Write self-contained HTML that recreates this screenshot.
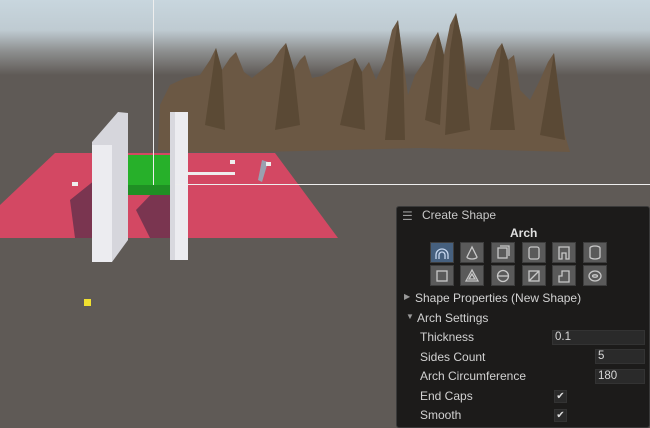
<!DOCTYPE html>
<html><head><style>
*{margin:0;padding:0;box-sizing:border-box}
body{width:650px;height:428px;overflow:hidden;position:relative;font-family:"Liberation Sans",sans-serif;background:#5f5a56}
#sky{position:absolute;left:0;top:0;width:650px;height:75px;background:linear-gradient(#c8d6de 0%,#bfcbd2 40%,#8e9090 68%,#5f5a56 100%)}
#panel{position:absolute;left:396px;top:206px;width:254px;height:222px;background:#1c1b1a;border:1px solid #3a3a3a;border-radius:3px;color:#d2d2d2;font-size:12px}
.t{position:absolute;white-space:nowrap}
.btn{position:absolute;width:24px;height:21px;background:#5a5a5a;border:1px solid #3e3e3e}
.fld{position:absolute;height:15px;background:#2a2a2a;border:1px solid #333;font-size:11.5px;padding-left:2px;line-height:13px;color:#d8d8d8}
.cb{position:absolute;width:13px;height:13px;background:#2a2a2a;border:1px solid #333;font-size:10px;line-height:11px;text-align:center;color:#ddd}
</style></head><body>
<div id="sky"></div>
<svg width="650" height="428" style="position:absolute;left:0;top:0">
<polygon fill="#6b5844" points="158,150 160,105 170,85 185,78 200,75 210,60 216,48 222,70 230,58 236,52 244,72 252,78 262,70 272,62 280,50 286,43 294,70 300,60 305,55 312,78 322,76 335,68 348,62 355,58 362,72 369,62 376,80 385,60 392,30 398,20 403,60 408,95 415,75 425,60 433,40 438,32 444,55 450,25 456,13 462,40 468,85 478,90 490,70 497,50 502,43 508,60 514,55 520,90 530,100 540,80 548,62 554,53 560,100 565,135 570,152 500,150 420,148 340,150 260,152 190,152"/>
<g fill="#54442f" opacity=".7">
<polygon points="216,48 222,70 225,130 205,125"/>
<polygon points="286,43 294,70 300,125 275,130"/>
<polygon points="398,20 403,60 405,140 385,140 392,60"/>
<polygon points="456,13 462,40 470,130 445,135 450,50"/>
<polygon points="438,32 444,55 440,125 425,120"/>
<polygon points="502,43 508,60 515,130 490,130"/>
<polygon points="554,53 560,100 565,140 540,135"/>
<polygon points="355,58 362,72 365,130 340,125"/>
</g>
<polygon fill="#d34863" points="55,153 275,153 338,238 0,238 0,205"/>
<polygon fill="#7a3550" points="70,200 95,180 95,238 75,238"/>
<polygon fill="#7a3550" points="136,210 160,185 172,190 172,238 150,238"/>
<rect x="123" y="155" width="48" height="40" fill="#27b02a"/>
<rect x="123" y="185" width="48" height="10" fill="#1f8f24"/>
<polygon fill="#d6d6dc" points="92,142 118,112 128,113 128,240 112,262 92,262"/>
<rect x="92" y="145" width="20" height="117" fill="#ececf0"/>
<rect x="170" y="112" width="18" height="148" fill="#ececf0"/>
<rect x="170" y="112" width="5" height="148" fill="#d8d8de"/>
<rect x="185" y="172" width="50" height="3" fill="#eee"/>
<polygon fill="#9aa0b0" points="262,160 268,162 262,182 258,180"/>
<rect x="266" y="162" width="5" height="4" fill="#eee"/>
<rect x="230" y="160" width="5" height="4" fill="#eee"/>
<rect x="72" y="182" width="6" height="4" fill="#eee"/>
<line x1="153.5" y1="0" x2="153.5" y2="185" stroke="#eee" stroke-width="1"/>
<line x1="175" y1="184.5" x2="650" y2="184.5" stroke="#eee" stroke-width="1"/>
<rect x="84" y="299" width="7" height="7" fill="#f0e030"/>
</svg>
<div id="panel">
<div class="t" style="left:5px;top:2px;color:#9a9a9a">☰</div>
<div class="t" style="left:25px;top:1px;color:#c8c8c8">Create Shape</div>
<div class="t" style="left:113px;top:19px;font-weight:bold;color:#e0e0e0">Arch</div>
<div class="btn" style="left:33px;top:35px;background:#46607e"></div>
<div class="btn" style="left:63px;top:35px"></div>
<div class="btn" style="left:94px;top:35px"></div>
<div class="btn" style="left:125px;top:35px"></div>
<div class="btn" style="left:155px;top:35px"></div>
<div class="btn" style="left:186px;top:35px"></div>
<div class="btn" style="left:33px;top:58px"></div>
<div class="btn" style="left:63px;top:58px"></div>
<div class="btn" style="left:94px;top:58px"></div>
<div class="btn" style="left:125px;top:58px"></div>
<div class="btn" style="left:155px;top:58px"></div>
<div class="btn" style="left:186px;top:58px"></div>
<svg width="254" height="90" style="position:absolute;left:0;top:0" fill="none" stroke="#c8c8c8" stroke-width="1.3">
<path d="M39,52 v-4 a6,6 0 0 1 12,0 v4 M42,52 v-4 a3,3 0 0 1 6,0 v4" stroke="#c8d8f0"/>
<path d="M75,40 l-5,10 a5,2 0 0 0 10,0 z"/>
<rect x="101" y="41" width="9" height="10"/><path d="M103,39 h9 v10"/>
<rect x="132" y="40" width="10" height="12" rx="2"/>
<path d="M162,52 v-12 h10 v12 h-3 v-6 h-4 v6 z"/>
<path d="M193,41 v9 a5,2 0 0 0 10,0 v-9 a5,2 0 0 0 -10,0"/>
<rect x="40" y="64" width="10" height="10"/>
<path d="M75,63 l-6,11 h12 z M75,67 l-3,5 h6 z"/>
<circle cx="106" cy="69" r="5.5"/><path d="M100.5,69 h11"/>
<rect x="132" y="64" width="10" height="10"/><path d="M132,74 l10,-10"/>
<path d="M162,75 v-6 h3 v-5 h7 v11 z"/>
<ellipse cx="198" cy="69" rx="6" ry="5"/><ellipse cx="198" cy="69" rx="2.5" ry="1.2"/>
</svg>
<div class="t" style="left:7px;top:85px;font-size:8px;color:#999">▶</div>
<div class="t" style="left:18px;top:84px">Shape Properties (New Shape)</div>
<div class="t" style="left:9px;top:105px;font-size:8px;color:#999">▼</div>
<div class="t" style="left:20px;top:104px">Arch Settings</div>
<div class="t" style="left:23px;top:123px">Thickness</div>
<div class="fld" style="left:155px;top:123px;width:93px">0.1</div>
<div class="t" style="left:23px;top:143px">Sides Count</div>
<div class="fld" style="left:198px;top:142px;width:50px">5</div>
<div class="t" style="left:23px;top:162px">Arch Circumference</div>
<div class="fld" style="left:198px;top:162px;width:50px">180</div>
<div class="t" style="left:23px;top:182px">End Caps</div>
<div class="cb" style="left:157px;top:183px">✔</div>
<div class="t" style="left:23px;top:201px">Smooth</div>
<div class="cb" style="left:157px;top:202px">✔</div>
</div>
</body></html>
